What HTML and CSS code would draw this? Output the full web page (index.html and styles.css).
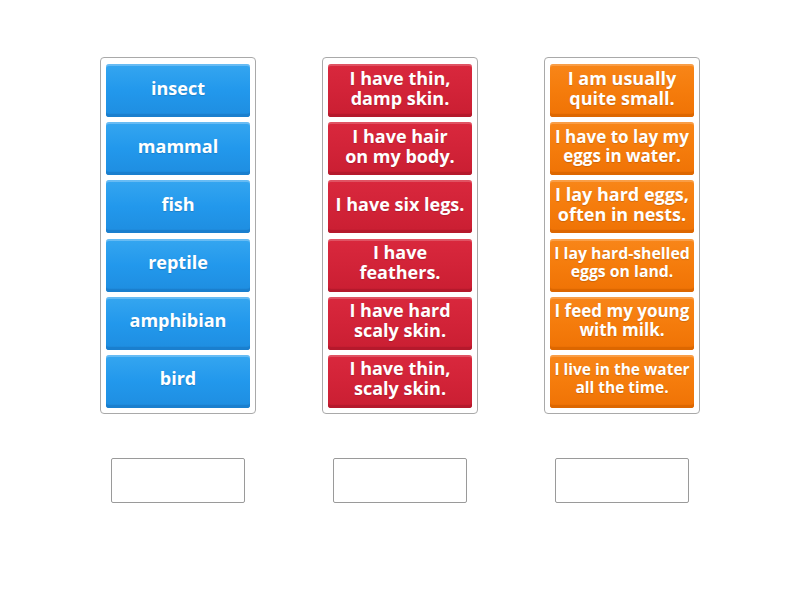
FILE: index.html
```html
<!DOCTYPE html>
<html>
<head>
<meta charset="utf-8">
<link rel="stylesheet" href="styles.css">
</head>
<body>
<div class="board">
  <div class="group">
    <div class="column">
      <div class="tile blue">insect</div>
      <div class="tile blue">mammal</div>
      <div class="tile blue">fish</div>
      <div class="tile blue">reptile</div>
      <div class="tile blue">amphibian</div>
      <div class="tile blue">bird</div>
    </div>
    <div class="slot"></div>
  </div>
  <div class="group">
    <div class="column">
      <div class="tile red">I have thin, damp skin.</div>
      <div class="tile red">I have hair on my body.</div>
      <div class="tile red">I have six legs.</div>
      <div class="tile red">I have feathers.</div>
      <div class="tile red">I have hard scaly skin.</div>
      <div class="tile red">I have thin, scaly skin.</div>
    </div>
    <div class="slot"></div>
  </div>
  <div class="group">
    <div class="column">
      <div class="tile orange">I am usually quite small.</div>
      <div class="tile orange s17">I have to lay my eggs in water.</div>
      <div class="tile orange">I lay hard eggs, often in nests.</div>
      <div class="tile orange s158">I lay hard-shelled eggs on land.</div>
      <div class="tile orange s17">I feed my young with milk.</div>
      <div class="tile orange s155">I live in the water all the time.</div>
    </div>
    <div class="slot"></div>
  </div>
</div>
</body>
</html>
```
FILE: styles.css
```css
html, body {
  margin: 0;
  padding: 0;
  background: #ffffff;
}
body {
  font-family: "Open Sans", "Liberation Sans", sans-serif;
}
.board {
  display: flex;
  justify-content: center;
  gap: 66px;
  padding-top: 57px;
}
.group {
  display: flex;
  flex-direction: column;
  align-items: center;
  gap: 44px;
}
.column {
  width: 144px;
  padding: 6px 5px 5px 5px;
  border: 1px solid #a9a9a9;
  border-radius: 4px;
  display: flex;
  flex-direction: column;
  gap: 5.2px;
}
.tile {
  height: 53px;
  box-sizing: border-box;
  border-radius: 3px;
  display: flex;
  align-items: center;
  justify-content: center;
  text-align: center;
  text-wrap: balance;
  color: #ffffff;
  font-weight: 700;
  font-size: 18px;
  line-height: 20px;
  padding: 0 4px 6px 4px;
  text-shadow: 0 1px 1px rgba(0,0,0,0.15);
}
.tile.blue {
  background: linear-gradient(#35a6f0 0%, #2298ec 50%, #1f8fe2 92%, #1877c4 100%);
  box-shadow: inset 0 2px 0 rgba(255,255,255,0.25), inset 0 -3px 0 #1a7fce;
}
.tile.red {
  background: linear-gradient(#d9283d 0%, #d22338 50%, #cb1f33 92%, #b01528 100%);
  box-shadow: inset 0 2px 0 rgba(255,255,255,0.2), inset 0 -3px 0 #b5192c;
}
.tile.orange {
  background: linear-gradient(#f88619 0%, #f57c0c 50%, #f07406 92%, #d96400 100%);
  box-shadow: inset 0 2px 0 rgba(255,255,255,0.2), inset 0 -3px 0 #dd6700;
}
.tile.s17 {
  font-size: 17px;
  line-height: 19px;
}
.tile.s158 {
  font-size: 15.8px;
  line-height: 18px;
}
.tile.s155 {
  font-size: 15.5px;
  line-height: 18px;
}
.slot {
  width: 134px;
  height: 45px;
  box-sizing: border-box;
  border: 1px solid #9a9a9a;
  border-radius: 2px;
  background: #ffffff;
  margin-left: -1px;
}
```
